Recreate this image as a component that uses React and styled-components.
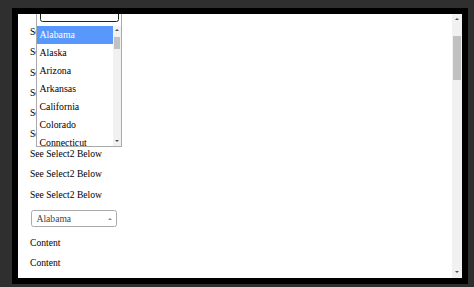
import React from "react";
import styled, { createGlobalStyle } from "styled-components";

const states = [
  "Alabama",
  "Alaska",
  "Arizona",
  "Arkansas",
  "California",
  "Colorado",
  "Connecticut",
  "Delaware",
];

const GlobalStyle = createGlobalStyle`
  html, body {
    margin: 0;
    padding: 0;
    background: #2f2f2f;
  }
  body {
    font-family: "Liberation Serif", "Times New Roman", serif;
  }
`;

const Frame = styled.div`
  width: 456px;
  height: 276px;
  margin: 8px 0 0 12px;
  padding: 6px;
  box-sizing: border-box;
  background: #000;
`;

const Viewport = styled.div`
  display: flex;
  height: 100%;
  background: #fff;
  overflow: hidden;
`;

const Page = styled.div`
  position: relative;
  flex: 1;
  padding: 8px 0 0 12px;
  font-size: 9.6px;
  color: #000;
`;

const Line = styled.p`
  margin: 0;
  line-height: 20.33px;
  white-space: nowrap;
`;

const Selection = styled.div`
  display: flex;
  align-items: center;
  justify-content: space-between;
  width: 86px;
  height: 17px;
  margin: 5.5px 0 5.5px 0.5px;
  padding: 0 4px 0 5px;
  box-sizing: border-box;
  border: 1px solid #aaa;
  border-radius: 2.5px;
  color: #444;
`;

const Arrow = styled.span`
  width: 0;
  height: 0;
  border-left: ${(p) => p.$size}px solid transparent;
  border-right: ${(p) => p.$size}px solid transparent;
  ${(p) => (p.$down ? "border-top" : "border-bottom")}: ${(p) => p.$size}px solid
    ${(p) => p.$color || "#505050"};
`;

const Dropdown = styled.div`
  position: absolute;
  left: 18px;
  top: -10px;
  width: 85.5px;
  box-sizing: border-box;
  border: 1px solid #aaa;
  background: #fff;
`;

const SearchWrap = styled.div`
  padding: 2.5px 2px 4px 3px;
`;

const Search = styled.div`
  height: 14px;
  box-sizing: border-box;
  border: 1px solid #222;
  border-radius: 0 0 2.5px 2.5px;
`;

const Results = styled.div`
  display: flex;
  height: 120.5px;
  overflow: hidden;
`;

const Options = styled.ul`
  flex: 1;
  margin: 0;
  padding: 0;
  list-style: none;
`;

const Option = styled.li`
  height: 18px;
  line-height: 18px;
  padding: 0 2.5px;
  font-size: 9.8px;
  white-space: nowrap;
  background: ${(p) => (p.$active ? "#5897fb" : "transparent")};
  color: ${(p) => (p.$active ? "#fff" : "#000")};
`;

const Track = styled.div`
  display: flex;
  flex-direction: column;
  align-items: center;
  width: ${(p) => p.$width}px;
  background: #f1f1f1;
`;

const ArrowBox = styled.div`
  display: flex;
  align-items: center;
  justify-content: center;
  width: 100%;
  height: ${(p) => p.$height}px;
  margin-top: ${(p) => (p.$bottom ? "auto" : "0")};
`;

const Thumb = styled.div`
  width: calc(100% - 2px);
  height: ${(p) => p.$length}px;
  margin-top: ${(p) => p.$offset}px;
  background: #c1c1c1;
`;

const Scrollbar = ({ width, arrow, offset, length, size }) => (
  <Track $width={width}>
    <ArrowBox $height={arrow}>
      <Arrow $size={size} />
    </ArrowBox>
    <Thumb $offset={offset} $length={length} />
    <ArrowBox $height={arrow + 2} $bottom>
      <Arrow $size={size} $down />
    </ArrowBox>
  </Track>
);

const App = () => {
  return (
    <>
      <GlobalStyle />
      <Frame>
        <Viewport>
          <Page>
            {Array.from({ length: 9 }).map((_, i) => (
              <Line key={i}>See Select2 Below</Line>
            ))}
            <Selection>
              <span>Alabama</span>
              <Arrow $size={2} $color="#888" />
            </Selection>
            <Line>Content</Line>
            <Line>Content</Line>

            <Dropdown>
              <SearchWrap>
                <Search />
              </SearchWrap>
              <Results>
                <Options>
                  {states.map((s, i) => (
                    <Option key={s} $active={i === 0}>
                      {s}
                    </Option>
                  ))}
                </Options>
                <Scrollbar width={8} arrow={9} offset={2} length={12} size={2} />
              </Results>
            </Dropdown>
          </Page>
          <Scrollbar width={10} arrow={10} offset={12} length={44} size={2.5} />
        </Viewport>
      </Frame>
    </>
  );
};

export default App;
